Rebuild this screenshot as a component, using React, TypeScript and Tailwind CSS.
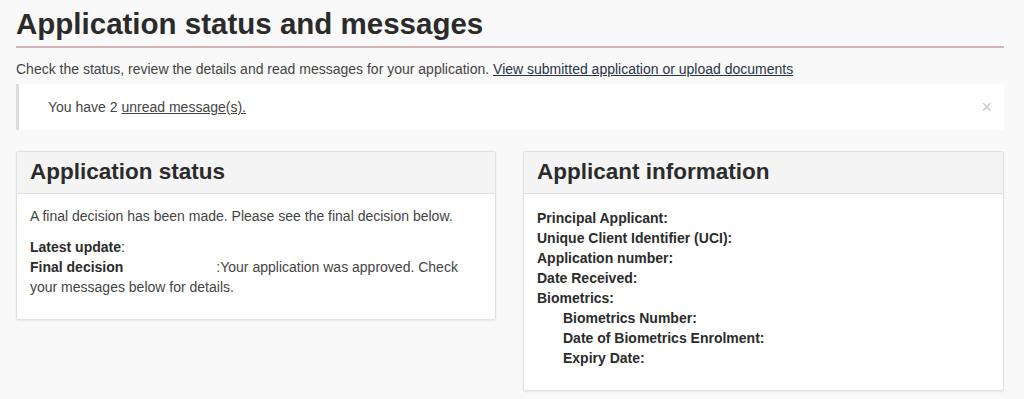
import React from 'react';

const Panel = ({ title, children, className = '' }: { title: string; children: React.ReactNode; className?: string }) => {
  return (
    <div className={`bg-white border border-[#e1e1e1] rounded-[2px] shadow-[0_1px_2px_rgba(0,0,0,0.08)] ${className}`}>
      <div className="bg-[#f4f4f4] border-b border-[#e1e1e1] h-[42px] px-[13px] flex items-center">
        <h2 className="text-[22.5px] font-bold text-[#2b2b2b] leading-none">{title}</h2>
      </div>
      {children}
    </div>
  );
};

const App = () => {
  return (
    <div className="min-h-[399px] bg-[#f9f9f9] text-[#333] font-['Liberation_Sans',Arial,sans-serif] px-4 pt-[6px]">
      <h1 className="text-[29.5px] font-bold leading-[36px] text-[#2b2b2b]">Application status and messages</h1>
      <div className="mt-[4px] mr-[4px] h-[2px] bg-[#d4b4b4]" />

      <p className="mt-[12px] text-[14px] leading-[18px] text-[#444]">
        Check the status, review the details and read messages for your application.{' '}
        <a href="#" className="underline text-[#2b3446]">View submitted application or upload documents</a>
      </p>

      <div className="mt-[6px] mr-[4px] h-[46px] bg-white border-l-[3px] border-[#dcdcdc] flex items-center justify-between pl-[29px] pr-[12px]">
        <p className="text-[14px] text-[#444]">
          You have 2 <a href="#" className="underline">unread message(s).</a>
        </p>
        <span className="text-[18px] text-[#c8c8c8] leading-none">×</span>
      </div>

      <div className="mt-[21px] mr-[4px] flex items-start gap-[27px]">
        <Panel title="Application status" className="w-[480px]">
          <div className="px-[13px] pt-[12px] pb-[22px] text-[14px] leading-[20px] text-[#444]">
            <p>A final decision has been made. Please see the final decision below.</p>
            <p className="mt-[11px]">
              <span className="font-bold text-[#2b2b2b]">Latest update</span>:
            </p>
            <p className="pr-[10px]">
              <span className="font-bold text-[#2b2b2b] mr-[93px]">Final decision</span>
              :Your application was approved. Check your messages below for details.
            </p>
          </div>
        </Panel>

        <Panel title="Applicant information" className="flex-1">
          <div className="px-[13px] pt-[14px] pb-[22px] text-[14px] leading-[20px] font-bold text-[#2b2b2b]">
            <p>Principal Applicant:</p>
            <p>Unique Client Identifier (UCI):</p>
            <p>Application number:</p>
            <p>Date Received:</p>
            <p>Biometrics:</p>
            <div className="pl-[26px]">
              <p>Biometrics Number:</p>
              <p>Date of Biometrics Enrolment:</p>
              <p>Expiry Date:</p>
            </div>
          </div>
        </Panel>
      </div>
    </div>
  );
};

export default App;
